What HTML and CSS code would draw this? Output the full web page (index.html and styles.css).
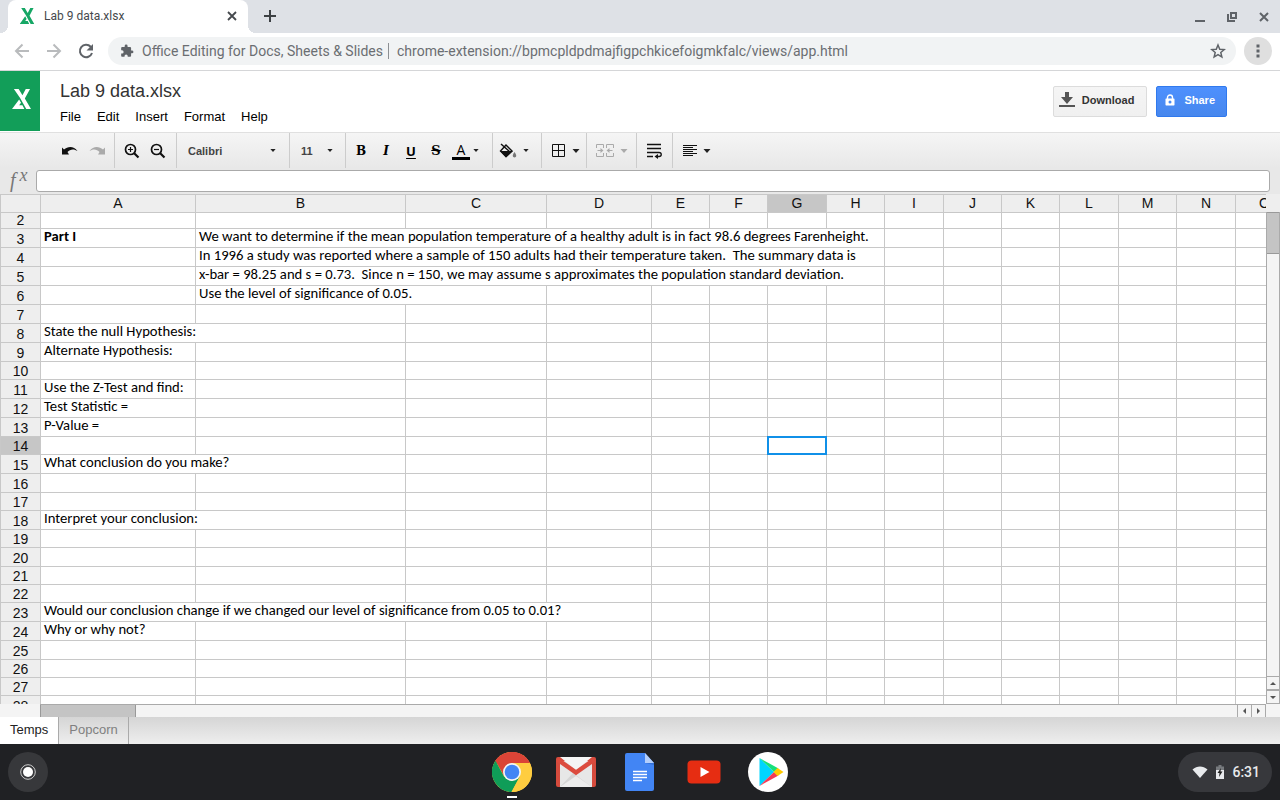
FILE: index.html
```html
<!DOCTYPE html>
<html lang="en">
<head>
<meta charset="utf-8">
<meta name="viewport" content="width=device-width, initial-scale=1">
<title>Lab 9 data.xlsx</title>
<link rel="stylesheet" href="styles.css">
</head>
<body>
<svg class="defs" aria-hidden="true">
  <symbol id="sheet-logo" viewBox="0 0 20 22">
    <path fill="currentColor" d="M2 0h5l4 7 3.500-7H19l-5.500 10.500L20 22h-5L8.500 10z"/>
    <path fill="currentColor" d="m7.500 11.500 2 3.500-2 3H11l2 4H0z"/>
  </symbol>
  <symbol id="caret" viewBox="0 0 8 4"><path d="M.5 0h7L4 4z" fill="currentColor"/></symbol>
</svg>

<header class="tabstrip">
  <div class="browser-tab">
    <svg class="favicon" viewBox="0 0 20 22"><use href="#sheet-logo"/></svg>
    <span class="browser-tab-title">Lab 9 data.xlsx</span>
    <button class="plain" aria-label="Close tab"><svg width="10" height="10" viewBox="0 0 10 10"><path d="m1 1 8 8m0-8-8 8" stroke="#45494d" stroke-width="1.800"/></svg></button>
  </div>
  <button class="plain new-tab" aria-label="New tab"><svg width="12" height="12" viewBox="0 0 12 12"><path d="M6 0v12M0 6h12" stroke="#3c4043" stroke-width="2"/></svg></button>
  <div class="window-buttons">
    <button class="plain" aria-label="Minimize"><svg width="10" height="10" viewBox="0 0 10 10"><path d="M0 9h10" stroke="#5f6368" stroke-width="2"/></svg></button>
    <button class="plain" aria-label="Restore"><svg width="10" height="10" viewBox="0 0 10 10"><path d="M4 1h5v5H4zM1 2v7h7" fill="none" stroke="#5f6368" stroke-width="2"/></svg></button>
    <button class="plain" aria-label="Close"><svg width="10" height="10" viewBox="0 0 10 10"><path d="m1 1 8 8m0-8-8 8" stroke="#5f6368" stroke-width="2"/></svg></button>
  </div>
</header>

<nav class="browser-bar" aria-label="Browser">
  <button class="plain" aria-label="Back"><svg width="16" height="16" viewBox="0 0 16 16"><path d="M15 8H2m6.500-6.500L2 8l6.500 6.500" fill="none" stroke="#b9bbbd" stroke-width="2"/></svg></button>
  <button class="plain" aria-label="Forward"><svg width="16" height="16" viewBox="0 0 16 16"><path d="M1 8h13M7.500 1.500 14 8l-6.500 6.500" fill="none" stroke="#b9bbbd" stroke-width="2"/></svg></button>
  <button class="plain" aria-label="Reload"><svg width="16" height="16" viewBox="0 0 16 16"><path d="M14 10a6.200 6.200 0 1 1-1.300-6.200L14 5" fill="none" stroke="#5f6368" stroke-width="2"/><path d="M15 1v6.500H8.500z" fill="#5f6368"/></svg></button>
  <div class="omnibox">
    <svg width="14" height="14" viewBox="0 0 24 24"><path fill="#5f6368" d="M20.500 11H19V7c0-1.100-.9-2-2-2h-4V3.500a2.500 2.500 0 0 0-5 0V5H4c-1.100 0-2 .9-2 2v3.800h1.500a2.700 2.700 0 0 1 0 5.400H2V20c0 1.100.9 2 2 2h3.800v-1.500a2.700 2.700 0 0 1 5.400 0V22H17c1.100 0 2-.9 2-2v-4h1.500a2.500 2.500 0 0 0 0-5z"/></svg>
    <span class="origin">Office Editing for Docs, Sheets &amp; Slides</span>
    <span class="url">chrome-extension://bpmcpldpdmajfigpchkicefoigmkfalc/views/app.html</span>
    <button class="plain" aria-label="Bookmark"><svg width="16" height="16" viewBox="0 0 24 24"><path fill="none" stroke="#5f6368" stroke-width="2.200" d="m12 3 2.600 6.300 6.800.6-5.200 4.400 1.600 6.700-5.800-3.600L6.200 21l1.600-6.700L2.600 9.900l6.800-.6z"/></svg></button>
  </div>
  <button class="plain browser-menu" aria-label="Menu"><svg width="4" height="14" viewBox="0 0 4 14"><path fill="#5f6368" d="M.5.500h3v3h-3zM.5 5.500h3v3h-3zM.5 10.500h3v3h-3z"/></svg></button>
</nav>

<div class="app-header">
  <div class="app-logo"><svg width="19" height="20" viewBox="0 0 20 22" preserveAspectRatio="none"><use href="#sheet-logo"/></svg></div>
  <div class="doc-info">
    <h1>Lab 9 data.xlsx</h1>
    <nav class="menus" aria-label="Document">
      <button class="plain">File</button><button class="plain">Edit</button><button class="plain">Insert</button><button class="plain">Format</button><button class="plain">Help</button>
    </nav>
  </div>
  <div class="doc-actions">
    <button class="action"><svg width="16" height="16" viewBox="0 0 16 16"><path fill="#555" d="M6 0h4v5h4l-6 7-6-7h4zM0 13h16v2H0z"/></svg>Download</button>
    <button class="action share"><svg width="10" height="12" viewBox="0 0 10 12"><path d="M2.500 5V3.500a2.500 2.500 0 0 1 5 0V5" fill="none" stroke="#fff" stroke-width="1.400"/><path fill="#fff" fill-rule="evenodd" d="M1 4.500h8l.5.500v6l-.5.500H1L.5 11V5zm4 2a1.500 1.500 0 1 0 0 3 1.500 1.500 0 0 0 0-3z"/></svg>Share</button>
  </div>
</div>

<div class="toolbar" role="toolbar" aria-label="Formatting">
  <div class="group history">
    <button class="plain tool" aria-label="Undo"><svg width="16" height="10" viewBox="0 0 16 10"><path fill="#111" d="M0 1.500 2 3.500C6 0 12 0 15.500 5 12 2.500 8 3 5.500 6L7 8.500H0z"/></svg></button>
    <button class="plain tool" aria-label="Redo" disabled><svg width="16" height="10" viewBox="0 0 16 10"><path fill="#aaa" d="m16 1.500-2 2C10 0 4 0 .5 5 4 2.500 8 3 10.500 6L9 8.500h7z"/></svg></button>
  </div>
  <div class="group zooming">
    <button class="plain tool" aria-label="Zoom in"><svg width="16" height="16" viewBox="0 0 16 16"><circle cx="6.500" cy="6.500" r="5" fill="none" stroke="#111" stroke-width="1.700"/><path d="m10 10 4.500 4.500" stroke="#111" stroke-width="2.200"/><path d="M4 6.500h5M6.500 4v5" stroke="#111" stroke-width="1.200"/></svg></button>
    <button class="plain tool" aria-label="Zoom out"><svg width="16" height="16" viewBox="0 0 16 16"><circle cx="6.500" cy="6.500" r="5" fill="none" stroke="#111" stroke-width="1.700"/><path d="m10 10 4.500 4.500" stroke="#111" stroke-width="2.200"/><path d="M4 6.500h5" stroke="#111" stroke-width="1.200"/></svg></button>
  </div>
  <div class="group picker family"><select aria-label="Font"><option>Calibri</option></select><svg class="caret"><use href="#caret"/></svg></div>
  <div class="group picker size"><select aria-label="Font size"><option>11</option></select><svg class="caret"><use href="#caret"/></svg></div>
  <div class="group text-style">
    <button class="plain tool bold" aria-label="Bold">B</button>
    <button class="plain tool italic" aria-label="Italic">I</button>
    <button class="plain tool underline" aria-label="Underline">U</button>
    <button class="plain tool strike" aria-label="Strikethrough">S</button>
    <button class="plain tool color" aria-label="Text color"><span>A</span></button>
    <svg class="caret near"><use href="#caret"/></svg>
  </div>
  <div class="group with-caret">
    <button class="plain tool" aria-label="Fill color"><svg width="18" height="16" viewBox="0 0 18 16"><path d="M2 1l9 8M7 2 1.500 8l5.500 5.500 6-5.500z" fill="none" stroke="#111" stroke-width="1.400"/><path fill="#111" d="M1 8h13l-7 6.500z"/><path fill="#777" d="M15.500 9c3 4 1.500 5.500 0 5.500S12.500 13 15.500 9z"/></svg></button>
    <svg class="caret"><use href="#caret"/></svg>
  </div>
  <div class="group with-caret borders">
    <button class="plain tool" aria-label="Borders"><svg width="14" height="14" viewBox="0 0 14 14"><path d="M.5.500h12v12H.5zM6.500.500v12M.5 6.500h12" fill="none" stroke="#111"/></svg></button>
    <svg class="caret"><use href="#caret"/></svg>
  </div>
  <div class="group with-caret merge">
    <button class="plain tool" aria-label="Merge cells" disabled><svg width="18" height="14" viewBox="0 0 18 14"><path d="M7.500 4V.500h-7V4m0 5v3.500h7V9M10.500 4V.500h7V4m0 5v3.500h-7V9M1.500 6.500H5M16.500 6.500H13" fill="none" stroke="#aaa"/><path fill="#aaa" d="m4.500 4 3 2.500-3 2.500zM13.500 4l-3 2.500 3 2.500z"/></svg></button>
    <svg class="caret faded"><use href="#caret"/></svg>
  </div>
  <div class="group wrap">
    <button class="plain tool" aria-label="Wrap text"><svg width="15" height="16" viewBox="0 0 15 16"><path d="M0 1.500h14M0 5.500h14M0 9.500h12c3 0 3 4 0 4h-2M0 13.500h6" fill="none" stroke="#111" stroke-width="1.300"/><path fill="#111" d="M11 11v5l-3.500-2.500z"/></svg></button>
  </div>
  <div class="group with-caret align">
    <button class="plain tool" aria-label="Align"><svg width="14" height="12" viewBox="0 0 14 12"><path d="M0 .5h14M0 2.500h10M0 4.500h14M0 6.500h10M0 8.500h14M0 10.500h10" stroke="#111"/></svg></button>
    <svg class="caret"><use href="#caret"/></svg>
  </div>
</div>

<div class="formula-bar">
  <label for="formula"><i>f</i><sup><i>x</i></sup></label>
  <input id="formula" type="text">
</div>

<main class="sheet">
  <div class="grid-area">
    <table>
      <colgroup id="columns"></colgroup>
      <thead><tr id="letters"></tr></thead>
      <tbody id="rows"></tbody>
    </table>
  </div>
  <div class="vscroll">
    <div class="vscroll-head"></div>
    <div class="vthumb"></div>
    <button class="plain arrow" aria-label="Scroll up"><svg width="6" height="3" viewBox="0 0 6 3"><path d="M0 3h6L3 0z"/></svg></button>
    <button class="plain arrow" aria-label="Scroll down"><svg width="6" height="3" viewBox="0 0 6 3"><path d="M0 0h6L3 3z"/></svg></button>
  </div>
  <div class="hscroll">
    <div class="hthumb"></div>
    <button class="plain arrow" aria-label="Scroll left"><svg width="3" height="6" viewBox="0 0 3 6"><path d="M3 0v6L0 3z"/></svg></button>
    <button class="plain arrow" aria-label="Scroll right"><svg width="3" height="6" viewBox="0 0 3 6"><path d="M0 0v6l3-3z"/></svg></button>
  </div>
  <div class="scroll-corner"></div>
</main>

<nav class="sheet-tabs" aria-label="Sheets">
  <button class="plain active">Temps</button>
  <button class="plain">Popcorn</button>
</nav>

<footer class="shelf">
  <div class="shelf-side"><button class="plain launcher" aria-label="Launcher"><svg width="16" height="16" viewBox="0 0 16 16"><circle cx="8" cy="8" r="7.300" fill="none" stroke="#ccc"/><circle cx="8" cy="8" r="5" fill="#fff"/></svg></button></div>
  <div class="apps">
    <button class="plain app running" aria-label="Chrome"><svg viewBox="0 0 40 40"><circle cx="20" cy="20" r="20" fill="#ffcd40"/><path fill="#db4437" d="M20 20 2.700 10a20 20 0 0 1 34.600 0l1.200 3z"/><path fill="#db4437" d="M20 11h17.800A20 20 0 0 0 3.500 8.700L12 24z"/><path fill="#0f9d58" d="M3.500 8.700A20 20 0 0 0 19.500 40L28 24.500l-8 4.500-8-4.500z"/><path fill="#ffcd40" d="M20 11h17.900A20 20 0 0 1 19.500 40L28 24z"/><circle cx="20" cy="20" r="9" fill="#f5f5f5"/><circle cx="20" cy="20" r="7.300" fill="#4285f4"/></svg></button>
    <button class="plain app" aria-label="Gmail"><svg viewBox="0 0 40 40"><rect y="5" width="40" height="30" rx="2" fill="#d54b3d"/><path fill="#e7e7e7" d="M4 9h32v26H4z"/><path fill="#f5f5f5" d="M4 5h32L20 18z"/><path fill="#d5d5d5" d="m4 35 13-14 19 14z"/><path fill="#ededed" d="m4 35 16-11 16 11z"/><path d="m1.500 7.500 18.500 13 18.500-13" fill="none" stroke="#dc4b3e" stroke-width="4.500"/></svg></button>
    <button class="plain app" aria-label="Docs"><svg viewBox="0 0 40 40"><path fill="#4285f4" d="M7 1h18l9 10v26q0 2-2 2H7q-2 0-2-2V3q0-2 2-2z"/><path fill="#b3cefb" d="m25 1 9 10h-9z"/><path fill="#3471d8" d="M25 11h9v2z"/><path d="M13 19.500h14M13 22.500h14M13 25.500h14M13 28.500h9" stroke="#fff" stroke-width="1.500"/></svg></button>
    <button class="plain app" aria-label="YouTube"><svg viewBox="0 0 40 40"><rect x="3.500" y="8.500" width="33" height="23" rx="4" fill="#e62d12"/><path fill="#fff" d="m16.500 15 9 5-9 5z"/></svg></button>
    <button class="plain app" aria-label="Play Store"><svg viewBox="0 0 40 40"><circle cx="20" cy="20" r="20" fill="#fff"/><path fill="#00d5ff" d="M11.500 6v28L26 20z"/><path fill="#16e07a" d="m11.500 6 19 10.500L26 20z"/><path fill="#f33b57" d="m11.500 34 19-10.500L26 20z"/><path fill="#ffc900" d="m29.500 16 6 4-6 4-4-4z"/></svg></button>
  </div>
  <div class="shelf-side end">
    <button class="plain status">
      <svg width="16" height="12" viewBox="0 0 16 12"><path fill="#e8eaed" d="M.5 3.500C5-.5 11-.5 15.500 3.500L8 12z"/></svg>
      <svg width="8" height="14" viewBox="0 0 8 14"><path fill="#777a7e" d="M2.500 0h3v1.500H8V5H0V1.500h2.500z"/><path fill="#e8eaed" d="M0 5h8v9H0z"/><path fill="#222" d="M5 3 1.500 8h2L3 12l3.500-5.500h-2z"/></svg>
      <span>6:31</span>
    </button>
  </div>
</footer>
<script src="sheet.js"></script>
</body>
</html>
```
FILE: styles.css
```css
* { box-sizing: border-box; }

body {
  margin: 0;
  height: 100vh;
  display: flex;
  flex-direction: column;
  overflow: hidden;
  background: #fff;
  color: #000;
  font-family: "Liberation Sans", Arial, sans-serif;
  font-size: 13px;
}

.defs { display: none; }

.plain {
  display: flex;
  align-items: center;
  justify-content: center;
  margin: 0;
  padding: 0;
  border: 0;
  background: none;
  color: inherit;
  font: inherit;
}

/* Browser frame */
.tabstrip {
  flex: none;
  display: flex;
  align-items: center;
  height: 33px;
  padding-left: 8px;
  background: #dee1e6;
}

.browser-tab {
  position: relative;
  display: flex;
  align-items: center;
  width: 240px;
  height: 33px;
  padding: 0 11px 2px;
  border-radius: 8px 8px 0 0;
  background: #fff;
  color: #45494d;
  font: 12px Roboto, sans-serif;
}

.browser-tab::before,
.browser-tab::after {
  content: "";
  position: absolute;
  bottom: 0;
  width: 8px;
  height: 8px;
}

.browser-tab::before { right: 100%; background: radial-gradient(circle at 0 0, #dee1e6 8px, #fff 8px); }
.browser-tab::after { left: 100%; background: radial-gradient(circle at 100% 0, #dee1e6 8px, #fff 8px); }

.favicon { width: 16px; height: 16px; margin-right: 9px; color: #16a765; }
.browser-tab-title { flex: 1; }
.new-tab { width: 20px; margin-left: 12px; padding-bottom: 2px; }
.window-buttons { display: flex; gap: 22px; margin-left: auto; padding-right: 11px; }

.browser-bar {
  flex: none;
  display: flex;
  align-items: center;
  gap: 16px;
  height: 38px;
  padding: 0 8px 1px 14px;
  border-bottom: 1px solid #d5d6d8;
  color: #6b6e72;
  font: 14px Roboto, sans-serif;
}

.omnibox {
  flex: 1;
  display: flex;
  align-items: center;
  height: 28px;
  margin: 0 -8px 0 -2px;
  padding: 0 10px 0 12px;
  border-radius: 14px;
  background: #f1f3f4;
}

.origin { margin-left: 8px; padding-right: 5px; border-right: 1px solid #8c8f93; }
.url { flex: 1; padding-left: 8px; }
.browser-menu { width: 28px; height: 28px; border-radius: 14px; background: #dfdfdf; }

/* Document header */
.app-header { flex: none; display: flex; height: 61px; }

.app-logo {
  display: flex;
  align-items: center;
  justify-content: center;
  width: 40px;
  height: 60px;
  padding: 0 0 4px 2px;
  background: #129e59;
  color: #fff;
}

.doc-info { flex: 1; padding: 10px 0 0 20px; }
.doc-info h1 { margin: 0; color: #333; font-size: 18px; font-weight: 400; line-height: 20px; }
.menus { display: flex; gap: 16px; padding-top: 8px; line-height: 16px; }
.doc-actions { display: flex; align-items: flex-start; gap: 9px; padding: 15px 53px 0 0; }

.action {
  display: flex;
  align-items: center;
  gap: 7px;
  height: 31px;
  margin: 0;
  padding: 0 12px 3px 5px;
  border: 1px solid #dcdcdc;
  border-radius: 2px;
  background: linear-gradient(#f5f5f5, #f0f0f0);
  color: #333;
  font: bold 11px "Liberation Sans", Arial, sans-serif;
}

.action.share {
  gap: 9px;
  padding: 0 11px 3px 8px;
  border-color: #3079ed;
  background: linear-gradient(#4d90fe, #4787ed);
  color: #fff;
}

/* Formatting toolbar */
.toolbar {
  flex: none;
  display: flex;
  height: 36px;
  border-top: 1px solid #e0e0e0;
  background: linear-gradient(#f5f5f5, #e8e8e8);
}

.group { display: flex; align-items: center; border-right: 1px solid #ccc; }
.group:last-child { border-right: 0; }
.tool { width: 20px; height: 20px; }
.history { gap: 7px; padding: 0 7px 0 60px; }
.zooming { gap: 6px; padding: 0 8px 0 7px; }
.caret { width: 8px; height: 4px; color: #222; }
.caret.near { width: 6px; height: 3px; }
.text-style .color { margin-right: -3px; }
.caret.faded { color: #aaa; }

.picker select {
  flex: 1;
  min-width: 0;
  padding: 0;
  border: 0;
  appearance: none;
  background: none;
  color: #444;
  font: bold 11px "Liberation Sans", Arial, sans-serif;
}

.picker .caret { width: 6px; height: 3px; }
.family { width: 113px; padding: 0 13px 0 11px; }
.size { width: 56px; padding: 0 12px 0 11px; }
.text-style { gap: 5px; padding: 0 13px 0 5px; }
.bold { font: bold 12px "DejaVu Serif", serif; }
.italic { font: italic bold 12px "DejaVu Serif", serif; }
.underline { font: bold 13px "Open Sans", sans-serif; text-decoration: underline; text-underline-offset: 2px; }
.strike { font: bold 13px "DejaVu Serif", serif; text-decoration: line-through; }
.color span { width: 18px; border-bottom: 3px solid #000; font: 14px/15px "Open Sans", sans-serif; text-align: center; }
.with-caret { gap: 5px; padding: 0 12px 0 5px; }
.with-caret .caret { width: 6px; height: 3px; }
.borders, .align { gap: 3px; padding: 0 6px 0 7px; }
.borders .caret, .merge .caret, .align .caret { width: 8px; height: 4px; }
.merge { padding: 0 8px; }
.wrap { padding: 0 8px 0 7px; }

.formula-bar {
  flex: none;
  display: flex;
  height: 26px;
  padding: 2px 10px 2px 0;
  background: #e8e8e8;
}

.formula-bar label { width: 36px; padding-left: 10px; color: #777; font: 20px/20px "Liberation Serif", serif; }
.formula-bar sup { margin-left: 4px; font-size: 18px; line-height: 0; vertical-align: 6px; }
.formula-bar input { flex: 1; min-width: 0; padding: 0 4px; border: 1px solid #aaa; border-radius: 3px; background: #fff; }

/* Spreadsheet */
.sheet {
  flex: 1;
  min-height: 0;
  display: grid;
  grid-template: minmax(0, 1fr) 13px / minmax(0, 1fr) 14px;
  background: #fff;
}

.grid-area { overflow: hidden; }

table { width: 1284px; border-spacing: 0; table-layout: fixed; }

th, td {
  padding: 0;
  border-right: 1px solid #c8c8c8;
  border-bottom: 1px solid #c8c8c8;
  white-space: nowrap;
}

th { background: #eee; color: #111; font-size: 14px; font-weight: 400; line-height: 15px; vertical-align: bottom; }
thead th { height: 19px; border-top: 1px solid #c8c8c8; line-height: 17px; }
th:first-child { border-left: 1px solid #c8c8c8; }
th.current { background: #c6c6c6; }

td {
  height: inherit;
  padding-left: 3px;
  font: 11pt/15px Carlito, Lato, sans-serif;
  vertical-align: top;
}

td.strong { font-weight: 700; }
td.selected { position: relative; }
td.selected::after { content: ""; position: absolute; inset: -1px; border: 2px solid #1090e8; }

.short { height: 16px; }
.medium { height: 18px; }
.tall { height: 19px; }

.vscroll { display: flex; flex-direction: column; border-left: 1px solid #aaa; border-right: 1px solid #aaa; background: #f4f4f4; }
.vscroll-head { height: 18px; margin: 0 -1px; background: #eee; }
.vthumb { height: 42px; margin-bottom: auto; border: solid #999; border-width: 1px 0; background: #c4c4c4; }
.arrow { border: 1px solid #aaa; fill: #555; }
.vscroll .arrow { height: 14px; border-width: 1px 0; }
.hscroll { display: flex; margin-left: 40px; border-top: 1px solid #aaa; background: #f4f4f4; box-shadow: -40px 0 #f4f4f4; }
.hthumb { width: 96px; margin-right: auto; border: solid #999; border-width: 0 1px; background: #c4c4c4; }
.hscroll .arrow { width: 15px; border-width: 0 1px; }
.hscroll .arrow + .arrow { width: 14px; border-left: 0; }
.scroll-corner { background: #f4f4f4; }

.sheet-tabs {
  flex: none;
  display: flex;
  height: 27px;
  background: linear-gradient(#d5d5d5, #eee);
  color: #808080;
  font-size: 13px;
}

.sheet-tabs button { padding: 0 10px 2px; border-right: 1px solid #aaa; }
.sheet-tabs .active { background: #fff; color: #222; }

/* System shelf */
.shelf {
  flex: none;
  display: flex;
  align-items: center;
  height: 56px;
  padding: 0 8px;
  background: #202124;
}

.shelf-side { flex: 1; display: flex; }
.shelf-side.end { justify-content: flex-end; }
.launcher { width: 40px; height: 40px; border-radius: 20px; background: #37383b; }
.apps { display: flex; gap: 24px; }
.app { position: relative; }
.app svg { width: 40px; height: 40px; }
.running::after { content: ""; position: absolute; bottom: -6px; width: 10px; height: 2px; background: #fff; }

.status {
  gap: 8px;
  height: 40px;
  padding: 0 12px 0 14px;
  border-radius: 20px;
  background: #37383c;
  color: #e8eaed;
  font: 500 14px Roboto, sans-serif;
}
```
FILE: sheet.js
```js
const columns = [
  ["A", 155], ["B", 210], ["C", 141], ["D", 105], ["E", 58], ["F", 58], ["G", 59], ["H", 58],
  ["I", 59], ["J", 58], ["K", 58], ["L", 59], ["M", 58], ["N", 59], ["O", 58]
];
const selected = { column: "G", row: 14 };
const mediumRows = [10, 14, 17, 19, 21, 22, 26, 27];

// Text cells by row; span is how many columns the overflowing text covers.
const cells = {
  3: [{ at: 0, text: "Part I", strong: true }, { at: 1, span: 7, text: "We want to determine if the mean population temperature of a healthy adult is in fact 98.6 degrees Farenheight." }],
  4: [{ at: 1, span: 7, text: "In 1996 a study was reported where a sample of 150 adults had their temperature taken.\u00a0 The summary data is" }],
  5: [{ at: 1, span: 7, text: "x-bar = 98.25 and s = 0.73.\u00a0 Since n = 150, we may assume s approximates the population standard deviation." }],
  6: [{ at: 1, span: 2, text: "Use the level of significance of 0.05." }],
  8: [{ at: 0, span: 2, text: "State the null Hypothesis:" }],
  9: [{ at: 0, text: "Alternate Hypothesis:" }],
  11: [{ at: 0, text: "Use the Z-Test and find:" }],
  12: [{ at: 0, text: "Test Statistic =" }],
  13: [{ at: 0, text: "P-Value =" }],
  15: [{ at: 0, span: 2, text: "What conclusion do you make?" }],
  18: [{ at: 0, span: 2, text: "Interpret your conclusion:" }],
  23: [{ at: 0, span: 4, text: "Would our conclusion change if we changed our level of significance from 0.05 to 0.01?" }],
  24: [{ at: 0, text: "Why or why not?" }]
};

function header(text, current, scope) {
  const th = document.createElement("th");
  th.textContent = text;
  th.scope = scope;
  if (current) th.className = "current";
  return th;
}

const colgroup = document.getElementById("columns");
const letters = document.getElementById("letters");
for (const width of [41, ...columns.map(c => c[1])]) {
  const col = document.createElement("col");
  col.style.width = width + "px";
  colgroup.append(col);
}
letters.append(header("", false, "col"));
for (const [name] of columns) letters.append(header(name, name === selected.column, "col"));

const body = document.getElementById("rows");
for (let row = 2; row <= 28; row++) {
  const tr = document.createElement("tr");
  tr.className = row === 2 ? "short" : mediumRows.includes(row) ? "medium" : "tall";
  tr.append(header(row, row === selected.row, "row"));
  for (let i = 0; i < columns.length;) {
    const td = document.createElement("td");
    const cell = (cells[row] || []).find(c => c.at === i);
    if (cell) {
      td.textContent = cell.text;
      td.colSpan = cell.span || 1;
      if (cell.strong) td.className = "strong";
    }
    if (row === selected.row && columns[i][0] === selected.column) td.className = "selected";
    tr.append(td);
    i += td.colSpan;
  }
  body.append(tr);
}
```
